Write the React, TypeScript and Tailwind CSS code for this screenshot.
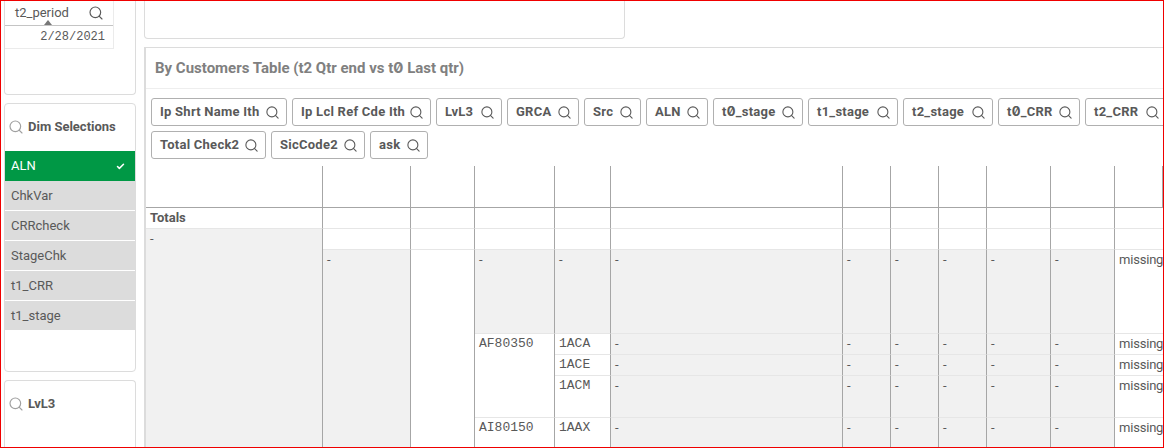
import { Check, Search } from 'lucide-react'

// =============================================================================
// Data
// =============================================================================

const firstRowChips = [
  { label: 'Ip Shrt Name Ith', width: 'w-[136px]' },
  { label: 'Ip Lcl Ref Cde Ith', width: 'w-[139px]' },
  { label: 'LvL3', width: 'w-[66px]' },
  { label: 'GRCA', width: 'w-[72px]' },
  { label: 'Src', width: 'w-[57px]' },
  { label: 'ALN', width: 'w-[62px]' },
  { label: 't0_stage', width: 'w-[90px]' },
  { label: 't1_stage', width: 'w-[90px]' },
  { label: 't2_stage', width: 'w-[90px]' },
  { label: 't0_CRR', width: 'w-[82px]' },
  { label: 't2_CRR', width: 'w-[82px]' },
]

const secondRowChips = [
  { label: 'Total Check2', width: 'w-[115px]' },
  { label: 'SicCode2', width: 'w-[94px]' },
  { label: 'ask', width: 'w-[58px]' },
]

const dimItems = ['ChkVar', 'CRRcheck', 'StageChk', 't1_CRR', 't1_stage']

const sans = 'font-["Roboto",sans-serif]'
const mono = 'font-["Liberation_Mono",monospace]'

// =============================================================================
// Small parts
// =============================================================================

// O zero cortado só existe na Inter
function SlashedText({ text }: { text: string }) {
  const parts = text.split('0')
  return (
    <>
      {parts.map((part, i) => (
        <span key={i}>
          {part}
          {i < parts.length - 1 && <span className='font-["Inter",sans-serif] slashed-zero'>0</span>}
        </span>
      ))}
    </>
  )
}

function FieldChip({ label, width }: { label: string; width: string }) {
  return (
    <div
      className={`${width} h-[28px] shrink-0 flex items-center justify-between pl-[8px] pr-[6px] border border-[#b0b0b0] rounded-[3px] text-[13px] tracking-[0.25px] font-bold text-[#595959]`}
    >
      <span className="whitespace-nowrap">
        <SlashedText text={label} />
      </span>
      <Search className="w-[15px] h-[15px] text-[#595959]" strokeWidth={1.75} />
    </div>
  )
}

function PanelTitle({ title }: { title: string }) {
  return (
    <div className="flex items-center gap-[4px] pl-[3px] pb-[2px] h-[47px]">
      <Search className="w-[16px] h-[16px] text-[#a0a0a0]" strokeWidth={1.75} />
      <span className="text-[13px] font-bold text-[#595959]">{title}</span>
    </div>
  )
}

// Célula da tabela. A linha vertical é a borda direita
function Cell({
  children,
  className = '',
}: {
  children?: React.ReactNode
  className?: string
}) {
  return (
    <div
      className={`min-w-0 overflow-hidden whitespace-nowrap border-r border-[#a6a6a6] pl-[4px] pr-[4px] pt-[2px] text-[13px] leading-[16px] text-[#595959] ${className}`}
    >
      {children}
    </div>
  )
}

function DashCells({ line = true }: { line?: boolean }) {
  return (
    <>
      {[0, 1, 2, 3, 4, 5].map((i) => (
        <Cell key={i} className={`bg-[#f1f1f1] ${line ? 'border-b border-b-[#e6e6e6]' : ''}`}>
          -
        </Cell>
      ))}
    </>
  )
}

function MissingCell({ line = true }: { line?: boolean }) {
  return (
    <Cell className={`border-r-0 pr-0! tracking-[-0.2px] ${line ? 'border-b border-b-[#e6e6e6]' : ''}`}>
      missing
    </Cell>
  )
}

function DataTable() {
  return (
    <div className="flex-1 min-h-0 grid grid-cols-[177px_88px_64px_80px_56px_232px_48px_48px_48px_64px_64px_1fr] grid-rows-[42px_21px_21px_84px_21px_21px_42px_1fr]">
      {/* Header */}
      {Array.from({ length: 12 }).map((_, i) => (
        <Cell key={i} className="border-b border-b-[#a6a6a6] last:border-r-0" />
      ))}

      {/* Totals */}
      <Cell className="font-bold border-b border-b-[#e6e6e6]">Totals</Cell>
      {Array.from({ length: 11 }).map((_, i) => (
        <Cell key={i} className={`border-b border-b-[#e6e6e6] ${i === 10 ? 'border-r-0' : ''}`} />
      ))}

      {/* Primeira coluna ocupa o resto da tabela */}
      <Cell className="row-span-6 bg-[#f1f1f1]">-</Cell>
      {Array.from({ length: 11 }).map((_, i) => (
        <Cell key={i} className={`border-b border-b-[#e6e6e6] ${i === 10 ? 'border-r-0' : ''}`} />
      ))}

      {/* Grupo "-" */}
      <Cell className="row-span-5 bg-[#f1f1f1]">-</Cell>
      <Cell className="row-span-5" />
      <Cell className="bg-[#f1f1f1] border-b border-b-[#e6e6e6]">-</Cell>
      <Cell className="bg-[#f1f1f1] border-b border-b-[#e6e6e6]">-</Cell>
      <DashCells />
      <MissingCell />

      {/* AF80350 */}
      <Cell className={`row-span-3 border-b border-b-[#e6e6e6] ${mono}`}>AF80350</Cell>
      <Cell className={`border-b border-b-[#e6e6e6] ${mono}`}>1ACA</Cell>
      <DashCells />
      <MissingCell />
      <Cell className={`border-b border-b-[#e6e6e6] ${mono}`}>1ACE</Cell>
      <DashCells />
      <MissingCell />
      <Cell className={`border-b border-b-[#e6e6e6] ${mono}`}>1ACM</Cell>
      <DashCells />
      <MissingCell />

      {/* AI80150 */}
      <Cell className={mono}>AI80150</Cell>
      <Cell className={mono}>1AAX</Cell>
      <DashCells line={false} />
      <MissingCell line={false} />
    </div>
  )
}

// =============================================================================
// App
// =============================================================================

export default function App() {
  return (
    <div
      className={`w-[1164px] h-[448px] overflow-hidden flex gap-[8px] bg-white border border-[#f00000] pl-[3px] ${sans}`}
    >
      {/* Left column */}
      <div className="w-[132px] shrink-0 flex flex-col gap-[8px]">
        <div className="h-[94px] shrink-0 border-x border-b border-[#dcdcdc] rounded-b-[4px]">
          <div className="w-[109px] h-[48px] border-r border-b border-[#ebebeb]">
            <div className="relative h-[25px] flex items-center justify-between pl-[10px] pr-[9px] border-b border-[#c4c4c4] text-[13px] text-[#595959]">
              <span>t2_period</span>
              <Search className="w-[16px] h-[16px]" strokeWidth={1.75} />
              <div className="absolute left-[39px] bottom-0 w-0 h-0 border-x-[4px] border-x-transparent border-b-[5px] border-b-[#777777]" />
            </div>
            <div className={`pr-[8px] pt-[3px] text-right text-[12px] leading-[16px] text-[#595959] ${mono}`}>
              2/28/2021
            </div>
          </div>
        </div>

        <div className="h-[269px] shrink-0 border border-[#dcdcdc] rounded-[4px]">
          <PanelTitle title="Dim Selections" />
          <div className="h-[30px] flex items-center justify-between pl-[6px] pr-[10px] bg-[#009845] text-[13px] text-white">
            <span>ALN</span>
            <Check className="w-[9px] h-[9px]" strokeWidth={4} />
          </div>
          {dimItems.map((item) => (
            <div
              key={item}
              className="h-[30px] flex items-center pl-[6px] bg-[#dcdcdc] border-b border-white last:h-[29px] last:border-b-0 text-[13px] text-[#595959]"
            >
              {item}
            </div>
          ))}
        </div>

        <div className="flex-1 border-x border-t border-[#dcdcdc] rounded-t-[4px]">
          <PanelTitle title="LvL3" />
        </div>
      </div>

      {/* Right column */}
      <div className="flex-1 min-w-0 flex flex-col gap-[8px]">
        <div className="w-[481px] h-[38px] shrink-0 border-x border-b border-[#dcdcdc] rounded-b-[4px]" />

        <div className="flex-1 min-h-0 flex flex-col border-t border-l-2 border-[#dcdcdc]">
          <div className="h-[41px] shrink-0 flex items-center pl-[9px] border-b border-[#eeeeee] text-[15px] font-bold text-[#808080]">
            <span>
              <SlashedText text="By Customers Table (t2 Qtr end vs t0 Last qtr)" />
            </span>
          </div>

          <div className="h-[77px] shrink-0 pt-[9px] pl-[5px] flex flex-col gap-[5px] overflow-hidden">
            <div className="flex gap-[5px]">
              {firstRowChips.map((chip) => (
                <FieldChip key={chip.label} {...chip} />
              ))}
            </div>
            <div className="flex gap-[5px]">
              {secondRowChips.map((chip) => (
                <FieldChip key={chip.label} {...chip} />
              ))}
            </div>
          </div>

          <DataTable />
        </div>
      </div>
    </div>
  )
}
